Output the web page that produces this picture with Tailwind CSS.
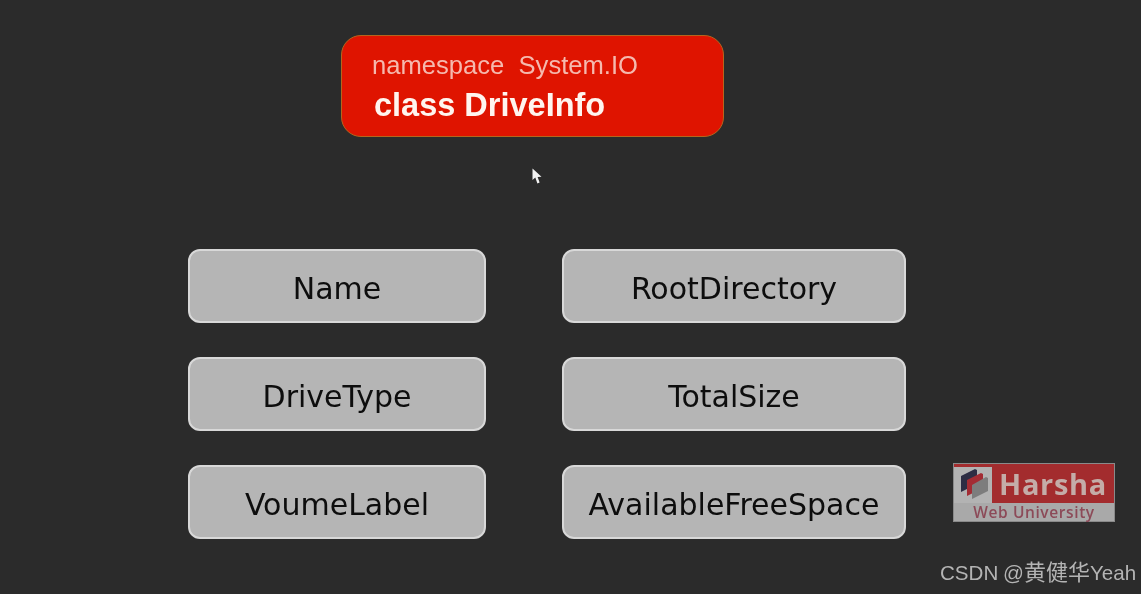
<!DOCTYPE html>
<html lang="en">
<head>
    <meta charset="UTF-8">
    <title>DriveInfo</title>
    <script src="https://cdn.jsdelivr.net/npm/@tailwindcss/browser@4"></script>
</head>
<body class="relative w-[1141px] h-[594px] overflow-hidden bg-[#2b2b2b] blur-[0.4px]">
    <!-- class box -->
    <div class="ml-[341px] pt-[35px]">
        <div class="w-[383px] h-[102px] rounded-[20px] bg-[#df1400] border border-[#b5651d] pl-[30px] pt-[14px] font-['Liberation_Sans',sans-serif]">
            <p class="text-[25.6px] leading-[30px] text-[#f5b9ae] whitespace-pre">namespace  System.IO</p>
            <p class="mt-[9px] ml-[2px] text-[32.5px] leading-[32px] font-bold text-[#fff5ef]">class DriveInfo</p>
        </div>
    </div>

    <!-- properties -->
    <div class="ml-[188px] mt-[112px] grid grid-cols-[298px_344px] gap-x-[76px] gap-y-[34px] font-['DejaVu_Sans',sans-serif] text-[30px] text-[#0d0d0d]">
        <div class="h-[74px] pt-[4px] flex items-center justify-center rounded-[12px] bg-[#b5b5b5] border-2 border-[#d8d8d8]">Name</div>
        <div class="h-[74px] pt-[4px] flex items-center justify-center rounded-[12px] bg-[#b5b5b5] border-2 border-[#d8d8d8]">RootDirectory</div>
        <div class="h-[74px] pt-[4px] flex items-center justify-center rounded-[12px] bg-[#b5b5b5] border-2 border-[#d8d8d8]">DriveType</div>
        <div class="h-[74px] pt-[4px] flex items-center justify-center rounded-[12px] bg-[#b5b5b5] border-2 border-[#d8d8d8]">TotalSize</div>
        <div class="h-[74px] pt-[4px] flex items-center justify-center rounded-[12px] bg-[#b5b5b5] border-2 border-[#d8d8d8]">VoumeLabel</div>
        <div class="h-[74px] pt-[4px] flex items-center justify-center rounded-[12px] bg-[#b5b5b5] border-2 border-[#d8d8d8]">AvailableFreeSpace</div>
    </div>

    <!-- mouse pointer -->
    <svg class="absolute left-[532px] top-[168px]" width="11" height="17" viewBox="0 0 11 17">
        <path d="M0.5 0.5 L0.5 12 L3.3 9.6 L5.4 15.5 L7.6 14.6 L5.6 9 L9.5 8.8 Z" fill="#f2f2f2"/>
    </svg>

    <!-- logo -->
    <div class="absolute left-[953px] top-[463px] w-[162px] h-[59px] flex flex-col bg-[#a9a9a9] border border-[#8a8a8a]">
        <div class="h-[39px] flex bg-[#a32c2e] pt-[3px]">
            <div class="w-[38px] h-[36px] bg-[#b3b3b3]">
                <svg width="38" height="36" viewBox="0 0 38 36">
                    <path d="M7 9 L21 2 L23 3 L23 17 L7 25 Z" fill="#2d2d44"/>
                    <path d="M13 13 L27 6 L29 7 L29 21 L13 29 Z" fill="#a32c34"/>
                    <path d="M18 18 L32 10 L34 11 L34 24 L18 32 Z" fill="#7d7d7d"/>
                </svg>
            </div>
            <div class="flex-1 pl-[7px] font-['Open_Sans',sans-serif] text-[29px] leading-[34px] font-bold tracking-[0.7px] text-[#c4aca8]">Harsha</div>
        </div>
        <div class="flex-1 text-center font-['Open_Sans',sans-serif] text-[15.5px] leading-[19px] font-semibold tracking-[0.6px] text-[#8c4a58]">Web University</div>
    </div>

    <!-- csdn watermark -->
    <div class="absolute left-[940px] top-[559px] font-['Liberation_Sans','Noto_Sans_CJK_SC',sans-serif] text-[20.6px] leading-[28px] text-[#b4b4b4] whitespace-nowrap [word-spacing:-1px]">CSDN @<span class="text-[22px]">黄健华</span>Yeah</div>
</body>
</html>
